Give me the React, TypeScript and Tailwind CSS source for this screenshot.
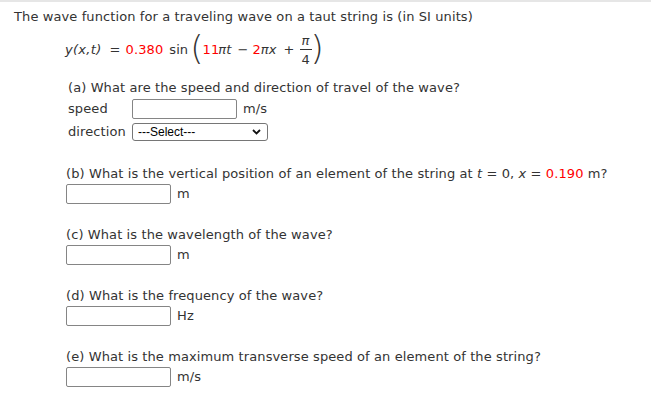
import React from "react";

const body = "font-['DejaVu_Sans',Verdana,sans-serif]";

function AnswerBox({ w = "w-[105px]" }: { w?: string }) {
  return <input type="text" className={`${w} h-[20px] border border-[#858585] rounded-[2px] bg-white outline-none`} />;
}

function Unit({ children }: { children: React.ReactNode }) {
  return <span className="ml-[6px] text-[13px] text-[#333]">{children}</span>;
}

function Question({ q, unit, first }: { q: React.ReactNode; unit: string; first?: boolean }) {
  return (
    <div className={`${first ? "mt-[23px]" : "mt-[22px]"} pl-[66px]`}>
      <div className="h-[18px] leading-[18px] text-[13px]">{q}</div>
      <div className="mt-[1px] flex items-center h-[20px]">
        <AnswerBox />
        <Unit>{unit}</Unit>
      </div>
    </div>
  );
}

export default function App() {
  return (
    <div className={`${body} w-[651px] h-[404px] bg-white text-[#333] tracking-[0.1px] border-t-2 border-[#e6e6e6] overflow-hidden`}>
      <div className="mt-[7px] pl-[14px] h-[16px] leading-[16px] text-[13px]">
        The wave function for a traveling wave on a taut string is (in SI units)
      </div>

      {/* equation */}
      <div className="mt-[6px] pl-[65px] h-[38px] flex items-center text-[13px] whitespace-nowrap">
        <span className="italic tracking-[0.3px]">y(x,t)</span>
        <span className="ml-[8px]">=</span>
        <span className="ml-[5px] text-[#f00]">0.380</span>
        <span className="ml-[6px]">sin</span>
        <span className="ml-[2px] text-[34px] leading-[34px] font-extralight inline-block -translate-y-[2px]">(</span>
        <span className="-ml-[1px] text-[#f00]">11</span>
        <span className="italic -ml-[1px]">πt</span>
        <span className="ml-[6px]">−</span>
        <span className="ml-[4px] text-[#f00]">2</span>
        <span className="italic">πx</span>
        <span className="ml-[7px]">+</span>
        <span className="ml-[5px] inline-flex flex-col items-center">
          <span className="italic leading-[16px]">π</span>
          <span className="w-[12px] h-[1px] bg-[#333]" />
          <span className="leading-[17px] pt-[1px]">4</span>
        </span>
        <span className="-ml-[1px] text-[34px] leading-[34px] font-extralight inline-block -translate-y-[2px]">)</span>
      </div>

      {/* (a) */}
      <div className="mt-[10px] pl-[68px] h-[18px] leading-[18px] text-[13px]">
        (a) What are the speed and direction of travel of the wave?
      </div>
      <div className="mt-[2px] pl-[68px] flex items-center h-[20px]">
        <span className="w-[64px] text-[13px]">speed</span>
        <AnswerBox />
        <Unit>m/s</Unit>
      </div>
      <div className="mt-[3px] pl-[68px] flex items-center h-[20px]">
        <span className="w-[64px] text-[13px]">direction</span>
        <div className="relative w-[136px] h-[18px] border border-[#767676] rounded-[3px] bg-white flex items-center pl-[5px] font-['Liberation_Sans',Arial,sans-serif] text-[12px] tracking-normal text-black">
          ---Select---
          <svg className="absolute right-[6px] top-[5px]" width="9" height="6" viewBox="0 0 9 6">
            <path d="M1 1 L4.5 4.5 L8 1" stroke="#111" strokeWidth="1.8" fill="none" />
          </svg>
        </div>
      </div>

      <Question
        first
        unit="m"
        q={
          <span>
            (b) What is the vertical position of an element of the string at <span className="italic">t</span> = 0,{" "}
            <span className="italic">x</span> = <span className="text-[#f00]">0.190</span> m?
          </span>
        }
      />
      <Question unit="m" q="(c) What is the wavelength of the wave?" />
      <Question unit="Hz" q="(d) What is the frequency of the wave?" />
      <Question unit="m/s" q="(e) What is the maximum transverse speed of an element of the string?" />
    </div>
  );
}
